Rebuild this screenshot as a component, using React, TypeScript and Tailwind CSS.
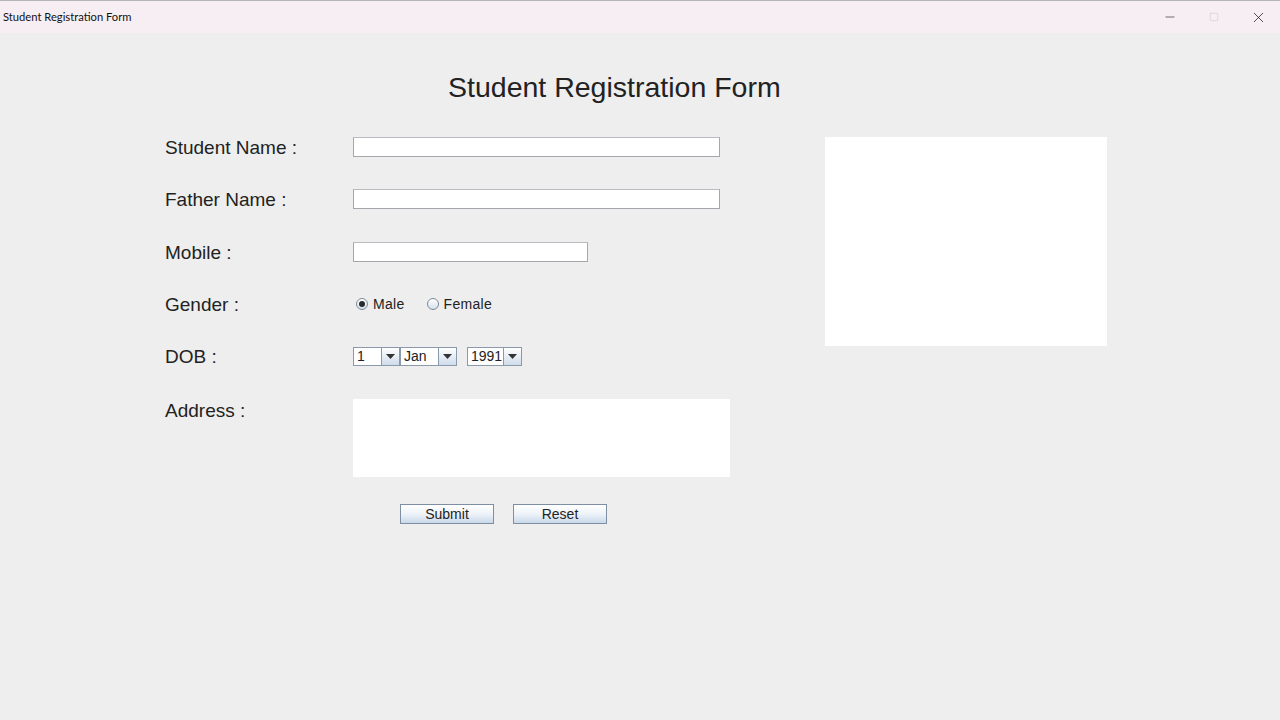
import { Minus, Square, X } from 'lucide-react';

const ui = { fontFamily: '"Liberation Sans", Arial, sans-serif' };

function TextField({ width }: { width: string }) {
  return (
    <div
      className={`h-[20px] ${width} border border-[#a4a8ad] border-t-[#b8bcc1] bg-white`}
    />
  );
}

function Combo({ value, width }: { value: string; width: string }) {
  return (
    <div className={`flex h-[19px] ${width} border border-[#8a99ab] bg-white`}>
      <span className="flex-1 pl-[3px] text-[14px] leading-[17px] text-[#222]">{value}</span>
      <span className="flex w-[18px] items-center justify-center border-l border-[#8a99ab] bg-gradient-to-b from-white to-[#cfdcea]">
        <svg width="9" height="5" viewBox="0 0 9 5">
          <path d="M0 0h9L4.5 5z" fill="#333" />
        </svg>
      </span>
    </div>
  );
}

function Radio({ label, checked }: { label: string; checked?: boolean }) {
  return (
    <label className="flex items-center gap-[5px] text-[14px] text-[#222]">
      <span className="flex h-[12px] w-[12px] items-center justify-center rounded-full border border-[#7d8a99] bg-gradient-to-b from-white to-[#d6e1ee]">
        {checked && <span className="h-[6px] w-[6px] rounded-full bg-[#2b2b2b]" />}
      </span>
      <span className="tracking-[0.3px]">{label}</span>
    </label>
  );
}

function Button({ label }: { label: string }) {
  return (
    <button className="h-[20px] w-[94px] border border-[#7f8fa3] bg-gradient-to-b from-white via-[#eef3f8] to-[#c9d8ea] text-[14px] leading-[18px] text-[#222]">
      {label}
    </button>
  );
}

function Row({ label, children, h = 'h-[52px]' }: { label: string; children: React.ReactNode; h?: string }) {
  return (
    <div className={`flex ${h} items-center`}>
      <div className="w-[188px] pt-[3px] text-[19px] text-[#222]">{label}</div>
      {children}
    </div>
  );
}

export default function App() {
  return (
    <div className="h-[720px] w-[1280px] overflow-hidden bg-[#eeeeee]" style={ui}>
      <div className="flex h-[33px] items-center border-t border-[#b5b5b5] bg-[#f7eef3]">
        <span
          className="pl-[3px] text-[11.2px] text-[#111]"
          style={{ fontFamily: 'Lato, "Noto Sans", sans-serif' }}
        >
          Student Registration Form
        </span>
        <div className="ml-auto flex h-full items-center">
          <span className="flex w-[44px] justify-center text-[#222]">
            <Minus size={14} strokeWidth={1.1} />
          </span>
          <span className="flex w-[44px] justify-center text-[#c4c0c4]">
            <Square size={10} strokeWidth={1.2} />
          </span>
          <span className="flex w-[44px] justify-center text-[#222]">
            <X size={17} strokeWidth={1.1} />
          </span>
        </div>
      </div>

      <h1 className="ml-[448px] mt-[37px] text-[28.5px] leading-[34px] text-[#222]">
        Student Registration Form
      </h1>

      <div className="mt-[17px] flex pl-[165px]">
        <div className="w-[660px]">
          <Row label="Student Name :">
            <TextField width="w-[367px]" />
          </Row>
          <Row label="Father Name :">
            <TextField width="w-[367px]" />
          </Row>
          <Row label="Mobile :" h="h-[53px]">
            <TextField width="w-[235px]" />
          </Row>
          <Row label="Gender :">
            <div className="flex items-center gap-[22px] pl-[3px]">
              <Radio label="Male" checked />
              <Radio label="Female" />
            </div>
          </Row>
          <Row label="DOB :">
            <div className="flex items-center">
              <Combo value="1" width="w-[47px]" />
              <Combo value="Jan" width="w-[57px]" />
              <div className="w-[10px]" />
              <Combo value="1991" width="w-[55px]" />
            </div>
          </Row>
          <div className="flex pt-[17px]">
            <div className="w-[188px] pt-[1px] text-[19px] leading-[22px] text-[#222]">Address :</div>
            <div className="h-[78px] w-[377px] bg-white" />
          </div>
          <div className="ml-[235px] mt-[27px] flex gap-[19px]">
            <Button label="Submit" />
            <Button label="Reset" />
          </div>
        </div>
        <div className="mt-[16px] h-[209px] w-[282px] bg-white" />
      </div>
    </div>
  );
}
